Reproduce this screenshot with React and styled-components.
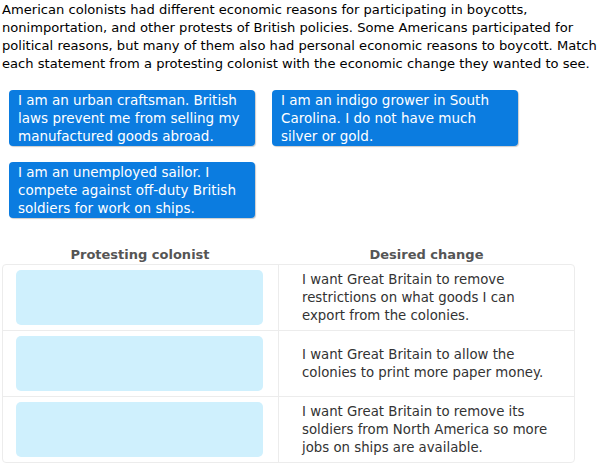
import React from 'react'
import styled, { createGlobalStyle } from 'styled-components'

const GlobalStyle = createGlobalStyle`
  html, body {
    margin: 0;
    padding: 0;
    background: #ffffff;
  }
  body {
    font-family: "DejaVu Sans", Verdana, sans-serif;
    font-size: 13px;
    color: #000;
  }
`

const statements = [
  'I am an urban craftsman. British laws prevent me from selling my manufactured goods abroad.',
  'I am an indigo grower in South Carolina. I do not have much silver or gold.',
  'I am an unemployed sailor. I compete against off-duty British soldiers for work on ships.',
]

const changes = [
  'I want Great Britain to remove restrictions on what goods I can export from the colonies.',
  'I want Great Britain to allow the colonies to print more paper money.',
  'I want Great Britain to remove its soldiers from North America so more jobs on ships are available.',
]

const App = () => {
  return (
    <Page>
      <GlobalStyle />
      <Intro>
        American colonists had different economic reasons for participating in boycotts,
        nonimportation, and other protests of British policies. Some Americans participated for
        political reasons, but many of them also had personal economic reasons to boycott. Match
        each statement from a protesting colonist with the economic change they wanted to see.
      </Intro>

      <CardPool>
        {statements.map((s) => (
          <Card key={s}>{s}</Card>
        ))}
      </CardPool>

      <Table>
        <HeaderRow>
          <HeaderCell>Protesting colonist</HeaderCell>
          <HeaderCell>Desired change</HeaderCell>
        </HeaderRow>
        <Body>
          {changes.map((c, i) => (
            <Row key={c} $last={i === changes.length - 1}>
              <DropCell>
                <DropZone />
              </DropCell>
              <ChangeCell>{c}</ChangeCell>
            </Row>
          ))}
        </Body>
      </Table>
    </Page>
  )
}

export default App

const Page = styled.div`
  width: 600px;
  padding: 1px 0 0 2px;
  box-sizing: border-box;
`

const Intro = styled.p`
  margin: 0;
  line-height: 18px;
  font-size: 13.1px;
  color: #000;
`

const CardPool = styled.div`
  display: grid;
  grid-template-columns: 246px 246px;
  column-gap: 17px;
  row-gap: 16px;
  margin: 17px 0 0 7px;
`

const Card = styled.div`
  height: 56px;
  box-sizing: border-box;
  padding: 1px 6px 0 9px;
  background: #0b7ce0;
  color: #ffffff;
  border-radius: 4px;
  box-shadow: 1px 1px 1px rgba(0, 0, 0, 0.2);
  font-size: 13.5px;
  line-height: 18px;
`

const Table = styled.div`
  margin-top: 28px;
  width: 573px;
`

const HeaderRow = styled.div`
  display: grid;
  grid-template-columns: 276px 297px;
  height: 18px;
`

const HeaderCell = styled.div`
  text-align: center;
  font-weight: bold;
  font-size: 13px;
  line-height: 18px;
  color: #555;
`

const Body = styled.div`
  border: 1px solid #ececec;
  border-radius: 4px;
`

const Row = styled.div`
  display: grid;
  grid-template-columns: 276px 295px;
  height: 65px;
  border-bottom: ${(p) => (p.$last ? 'none' : '1px solid #ececec')};
`

const DropCell = styled.div`
  display: flex;
  align-items: center;
  padding-left: 13px;
  border-right: 1px solid #ececec;
`

const DropZone = styled.div`
  width: 247px;
  height: 55px;
  background: #cff0fd;
  border-radius: 5px;
`

const ChangeCell = styled.div`
  display: flex;
  align-items: center;
  padding: 0 20px 0 23px;
  font-size: 13.3px;
  line-height: 18px;
  color: #333;
`
